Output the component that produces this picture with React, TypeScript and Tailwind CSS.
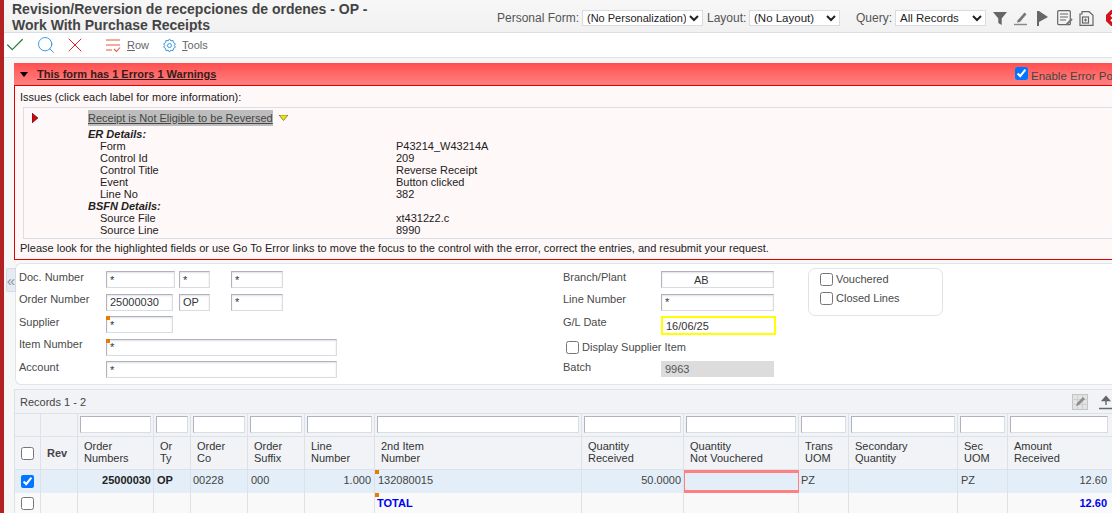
import { Check, Search, X } from "lucide-react";

const inputCls =
  "block h-[17px] bg-white border border-[#d8dce3] border-t-[#aeb3bf] border-l-[#aeb3bf] shadow-[inset_0_1px_2px_rgba(0,0,0,0.12)] text-[#333] text-[11px] px-[3px] outline-none";

function Field({ value, className = "", mark = false }: { value?: string; className?: string; mark?: boolean }) {
  return (
    <div className="relative shrink-0">
      <input readOnly value={value ?? ""} className={`${inputCls} ${className}`} />
      {mark && <span className="absolute left-0 top-0 w-[4px] h-[4px] bg-[#e87c00]" />}
    </div>
  );
}

function Label({ children, className = "" }: { children: React.ReactNode; className?: string }) {
  return <div className={`text-[11px] text-[#4a4a4a] leading-[14px] shrink-0 ${className}`}>{children}</div>;
}

function TopIcons() {
  return (
    <div className="flex items-center shrink-0 h-[16px] ml-[7px]">
      <svg width="14" height="15" viewBox="0 0 14 15" className="shrink-0"><path d="M0 1h14L8.7 7.5V14l-3.4-2V7.5z" fill="#666" /></svg>
      <svg width="14" height="15" viewBox="0 0 14 15" className="ml-[7px] shrink-0">
        <path d="M3.5 9.5 10.5 1.5l2 1.8-6.5 7.7-3 .6z" fill="#777" />
        <path d="M0 13.5h13" stroke="#888" strokeWidth="1.4" />
      </svg>
      <svg width="11" height="15" viewBox="0 0 11 15" className="ml-[9px] shrink-0"><path d="M0 0h2l9 6-9 5v4H0z" fill="#666" /></svg>
      <svg width="16" height="16" viewBox="0 0 16 16" className="ml-[9px] shrink-0" fill="none" stroke="#666">
        <rect x="0.7" y="0.7" width="12.6" height="14" rx="1" strokeWidth="1.2" />
        <path d="M3 4h8M3 7h8M3 10h6" strokeWidth="1.1" />
        <path d="M9.5 14.5 15 9" strokeWidth="2" stroke="#777" />
      </svg>
      <svg width="15" height="15" viewBox="0 0 15 15" className="ml-[6px] shrink-0" fill="none" stroke="#666" strokeWidth="1.2">
        <path d="M1 14.3V3h2V.7h7l4 3.5v10.1z" />
        <rect x="3.5" y="6" width="6" height="6" />
        <path d="M6.5 7.5v3M5 9h3" />
      </svg>
      <svg width="16" height="16" viewBox="0 0 16 16" className="ml-[12px] shrink-0">
        <path d="M5 0h6l5 5v6l-5 5H5l-5-5V5z" fill="#d3131a" />
        <path d="M5 5l6 6M11 5l-6 6" stroke="#fff" strokeWidth="2" />
      </svg>
    </div>
  );
}

function TopBar() {
  return (
    <div className="h-[33px] flex bg-gradient-to-b from-[#f7f7f7] to-[#f1f1f1] border-b border-[#d9dfe4] pl-[8px] overflow-hidden">
      <h1 className="w-[485px] shrink-0 text-[14px] font-bold text-[#444] leading-[16px] pt-[1px]">
        Revision/Reversion de recepciones de ordenes - OP -<br />
        Work With Purchase Receipts
      </h1>
      <div className="flex items-center shrink-0 h-[16px] mt-[10px] text-[12px] text-[#555] whitespace-nowrap">
        <span className="w-[85px]">Personal Form:</span>
        <select defaultValue="a" className="w-[121px] h-[16px] bg-white border border-[#d9dde3] text-[11px] text-[#222]">
          <option value="a">(No Personalization)</option>
        </select>
        <span className="ml-[4px] w-[42px]">Layout:</span>
        <select defaultValue="a" className="w-[91px] h-[16px] bg-white border border-[#d9dde3] text-[11.5px] text-[#222]">
          <option value="a">(No Layout)</option>
        </select>
        <span className="ml-[16px] w-[39px]">Query:</span>
        <select defaultValue="a" className="w-[91px] h-[16px] bg-white border border-[#d9dde3] text-[11.5px] text-[#222]">
          <option value="a">All Records</option>
        </select>
        <TopIcons />
      </div>
    </div>
  );
}

function ActionBar() {
  return (
    <div className="h-[25px] flex items-center bg-white border-b border-[#dfe3e8] text-[11px] text-[#666]">
      <Check size={22} strokeWidth={1.3} className="text-[#1e7e34] shrink-0" />
      <Search size={20} strokeWidth={1.1} className="text-[#2f8fdc] ml-[9.5px] shrink-0" />
      <X size={24} strokeWidth={1} className="text-[#d8232a] ml-[7px] shrink-0" />
      <svg width="15" height="15" viewBox="0 0 15 15" className="ml-[19.5px] shrink-0" fill="none">
        <path d="M0 2h14M0 7h14M0 12h6" stroke="#e8583c" strokeWidth="1.1" />
        <path d="M8 11l2.5 2.5L14 9.5" stroke="#e8583c" strokeWidth="1.1" />
      </svg>
      <span className="ml-[6px]"><u>R</u>ow</span>
      <svg width="15" height="15" viewBox="0 0 24 24" className="ml-[13px] text-[#3d94dd] shrink-0" fill="none" stroke="currentColor" strokeWidth="1.6">
        <path d="M12 1.5l2 3 3.6-.7.7 3.6 3.2 2-1.9 2.6 1.9 2.6-3.2 2-.7 3.6-3.6-.7-2 3-2-3-3.6.7-.7-3.6-3.2-2 1.9-2.6-1.9-2.6 3.2-2 .7-3.6 3.6.7z" />
        <circle cx="12" cy="12" r="3.2" />
      </svg>
      <span className="ml-[5px]"><u>T</u>ools</span>
    </div>
  );
}

const erRows = [
  ["Form", "P43214_W43214A"],
  ["Control Id", "209"],
  ["Control Title", "Reverse Receipt"],
  ["Event", "Button clicked"],
  ["Line No", "382"],
];

function DetailRow({ label, value }: { label: string; value: string }) {
  return (
    <div className="flex h-[12px] leading-[12px] pl-[76px]">
      <span className="w-[296px]">{label}</span>
      <span>{value}</span>
    </div>
  );
}

function ErrorPanel() {
  return (
    <div className="mt-[5px] ml-[10px] w-[1200px] text-[11px] text-[#222]">
      <div className="h-[23px] flex items-center bg-gradient-to-b from-[#ff4f4f] to-[#ff8080] border-b border-[#e60000] pl-[6px]">
        <span className="w-0 h-0 border-x-[4px] border-x-transparent border-t-[5px] border-t-black" />
        <span className="ml-[9px] w-[978px] shrink-0 font-bold text-[#3a1a1a] underline">This form has 1 Errors 1 Warnings</span>
        <input type="checkbox" readOnly checked className="w-[13px] h-[13px] m-0 -mt-[1px]" />
        <span className="ml-[3px] mt-[6px] text-[#444] text-[11.5px]">Enable Error Popup</span>
      </div>
      <div className="h-[174px] bg-[#fff8f8] border border-t-0 border-[#e60000] px-[5px] pt-[4px]">
        <div className="h-[14px] leading-[14px]">Issues (click each label for more information):</div>
        <div className="mt-[3px] ml-[3px] h-[132px] border border-[#d9dfe7] pt-[3px]">
          <div className="flex items-center h-[14px] pl-[8px]">
            <svg width="6" height="10" viewBox="0 0 6 10"><path d="M0 0l6 5-6 5z" fill="#d8000c" stroke="#222" strokeWidth="0.6" /></svg>
            <span className="ml-[50px] bg-[#bdbdbd] underline text-[#444]">Receipt is Not Eligible to be Reversed</span>
            <svg width="9" height="6" viewBox="0 0 9 6" className="ml-[6px]"><path d="M0 0h9L4.5 5.5z" fill="#f5e400" stroke="#444" strokeWidth="0.6" /></svg>
          </div>
          <div className="h-[12px] leading-[12px] mt-[3px] pl-[64px] font-bold italic">ER Details:</div>
          {erRows.map(([label, value]) => (
            <DetailRow key={label} label={label} value={value} />
          ))}
          <div className="h-[12px] leading-[12px] pl-[64px] font-bold italic">BSFN Details:</div>
          <DetailRow label="Source File" value="xt4312z2.c" />
          <DetailRow label="Source Line" value="8990" />
        </div>
        <div className="mt-[2px] leading-[14px] whitespace-nowrap">
          Please look for the highlighted fields or use Go To Error links to move the focus to the control with the error, correct the entries, and resubmit your request.
        </div>
      </div>
    </div>
  );
}

function Row({ label, children, className = "" }: { label: string; children: React.ReactNode; className?: string }) {
  return (
    <div className={`flex items-start h-[17px] ${className}`}>
      <Label className="w-[87px] -mt-[1.2px]">{label}</Label>
      {children}
    </div>
  );
}

function SearchForm() {
  return (
    <div className="relative flex mt-[3px] ml-[11px] w-[1200px] h-[122px] bg-white border border-r-0 border-[#e1e5ea] rounded-tl-[6px] rounded-bl-[6px] pt-[7px] pl-[3px]">
      <div className="absolute -left-[10px] top-[4px] w-[10px] h-[24px] bg-[#e6ebf2] border border-[#d5dbe3] rounded-l-[2px] flex items-center justify-center text-[#8a96a6] text-[15px] leading-none">«</div>
      <div className="w-[544px] shrink-0 flex flex-col gap-[5.5px]">
        <Row label="Doc. Number">
          <Field value="*" className="w-[69px]" />
          <Field value="*" className="w-[31px] ml-[4px]" />
          <Field value="*" className="w-[52px] ml-[21px]" />
        </Row>
        <Row label="Order Number">
          <Field value="25000030" className="w-[67px]" />
          <Field value="OP" className="w-[31px] ml-[6px]" />
          <Field value="*" className="w-[52px] ml-[21px]" />
        </Row>
        <Row label="Supplier"><Field value="*" className="w-[67px]" mark /></Row>
        <Row label="Item Number"><Field value="*" className="w-[231px]" mark /></Row>
        <Row label="Account"><Field value="*" className="w-[231px]" /></Row>
      </div>
      <div className="w-[245px] shrink-0 flex flex-col gap-[5.5px]">
        <Row label="Branch/Plant" className="[&>div:first-child]:w-[98px]">
          <Field value="AB" className="w-[113px] pl-[32px]" />
        </Row>
        <Row label="Line Number" className="[&>div:first-child]:w-[98px]">
          <Field value="*" className="w-[113px]" />
        </Row>
        <Row label="G/L Date" className="[&>div:first-child]:w-[98px]">
          <input readOnly value="16/06/25" className="block w-[115px] h-[19px] bg-white border-2 border-[#ffff00] text-[11px] text-[#333] pl-[3px] outline-none" />
        </Row>
        <label className="flex items-center h-[17px] pl-[3px] text-[11px] text-[#4a4a4a]">
          <input type="checkbox" className="w-[13px] h-[13px] m-0" />
          <span className="ml-[3px]">Display Supplier Item</span>
        </label>
        <Row label="Batch" className="[&>div:first-child]:w-[98px]">
          <div className="w-[113px] h-[16px] bg-[#dcdcdc] text-[11px] text-[#555] leading-[17px] pl-[4px]">9963</div>
        </Row>
      </div>
      <div className="w-[135px] h-[48px] -mt-[3px] border border-[#dfe3e8] rounded-[7px] pl-[11px] pt-[4px] text-[11px] text-[#4a4a4a] flex flex-col gap-[6px]">
        <label className="flex items-center h-[13px]"><input type="checkbox" className="w-[13px] h-[13px] m-0" /><span className="ml-[3px]">Vouchered</span></label>
        <label className="flex items-center h-[13px]"><input type="checkbox" className="w-[13px] h-[13px] m-0" /><span className="ml-[3px]">Closed Lines</span></label>
      </div>
    </div>
  );
}

const gridCols = "grid grid-cols-[26px_37px_76px_37px_57px_57px_70px_207px_102px_115px_50px_109px_50px_102px_100px]";

const headers: [string, string][] = [
  ["Order", "Numbers"],
  ["Or", "Ty"],
  ["Order", "Co"],
  ["Order", "Suffix"],
  ["Line", "Number"],
  ["2nd Item", "Number"],
  ["Quantity", "Received"],
  ["Quantity", "Not Vouchered"],
  ["Trans", "UOM"],
  ["Secondary", "Quantity"],
  ["Sec", "UOM"],
  ["Amount", "Received"],
];

const cellLine = "border-r border-[#dde2e9]";

function DataRow() {
  return (
    <div className={`${gridCols} h-[24px] bg-[#e3eef8] border-t border-[#dde2e9] text-[11px] text-[#444] leading-[21px]`}>
      <div className={`${cellLine} flex items-center justify-center`}><input type="checkbox" readOnly checked className="w-[13px] h-[13px] m-0" /></div>
      <div className={cellLine} />
      <div className={`${cellLine} text-right pr-[2px] font-bold text-[#222]`}>25000030</div>
      <div className={`${cellLine} pl-[3px] font-bold text-[#222]`}>OP</div>
      <div className={`${cellLine} pl-[2px]`}>00228</div>
      <div className={`${cellLine} pl-[3px]`}>000</div>
      <div className={`${cellLine} text-right pr-[3px]`}>1.000</div>
      <div className={`${cellLine} relative pl-[3px]`}>
        132080015
        <span className="absolute left-0 top-0 w-[4px] h-[4px] bg-[#e87c00]" />
      </div>
      <div className={`${cellLine} text-right pr-[2px]`}>50.0000</div>
      <div className="border-x border-y-[3px] border-[#ff8080]" />
      <div className={`${cellLine} pl-[2px]`}>PZ</div>
      <div className={cellLine} />
      <div className={`${cellLine} pl-[3px]`}>PZ</div>
      <div className="text-right pr-[3px]">12.60</div>
    </div>
  );
}

function TotalRow() {
  return (
    <div className={`${gridCols} h-[21px] bg-[#f9f9f9] text-[11px] font-bold text-[#0000ee] leading-[21px]`}>
      <div className={`${cellLine} flex items-center justify-center`}><input type="checkbox" className="w-[13px] h-[13px] m-0" /></div>
      <div className={cellLine} />
      <div className={cellLine} />
      <div className={cellLine} />
      <div className={cellLine} />
      <div className={cellLine} />
      <div className={cellLine} />
      <div className={`${cellLine} relative pl-[2px]`}>
        TOTAL
        <span className="absolute left-0 top-0 w-[4px] h-[4px] bg-[#e87c00]" />
      </div>
      <div className={cellLine} />
      <div className={cellLine} />
      <div className={cellLine} />
      <div className={cellLine} />
      <div className={cellLine} />
      <div className="text-right pr-[3px]">12.60</div>
    </div>
  );
}

function RecordsGrid() {
  return (
    <div className="mt-[4px] ml-[10px] w-[1200px] border-l border-t border-[#dde2e9]">
      <div className="h-[23px] flex items-center bg-[#f1f3f7] pl-[5px] pt-[1px] text-[11px] text-[#444]">
        <span className="w-[1052px] shrink-0">Records 1 - 2</span>
        <svg width="16" height="16" viewBox="0 0 16 16" fill="none" className="shrink-0">
          <rect x="0.5" y="0.5" width="15" height="15" fill="#e4e4e4" stroke="#c4c4c4" />
          <path d="M0 5.5h16M0 10.5h16M5.5 0v16M10.5 0v16" stroke="#cfcfcf" />
          <path d="M4 12l1-3 6-6 2 2-6 6z" fill="#8d8d8d" />
        </svg>
        <svg width="16" height="16" viewBox="0 0 16 16" className="ml-[10px] shrink-0" fill="none">
          <path d="M8 11V3M4.5 6.5 8 2.5l3.5 4z" fill="#666" stroke="#666" strokeWidth="1.4" />
          <path d="M1 14.5h14" stroke="#666" strokeWidth="1.5" />
        </svg>
      </div>
      <div className={`${gridCols} h-[23px] bg-[#f1f3f7] border-t border-[#dde2e9]`}>
        <div className={cellLine} />
        <div className={cellLine} />
        {headers.map(([a], i) => (
          <div key={a + i} className={`${i < 11 ? cellLine : ""} pt-[2px] flex justify-center`}>
            <div className="h-[17px] w-full mx-[2px] bg-white border border-[#d8dce3] border-t-[#aeb3bf] border-l-[#aeb3bf]" />
          </div>
        ))}
      </div>
      <div className={`${gridCols} h-[33px] bg-[#f1f3f7] border-t border-[#dde2e9] text-[11px] text-[#333] leading-[12px]`}>
        <div className={`${cellLine} flex items-center justify-center`}><input type="checkbox" className="w-[13px] h-[13px] m-0" /></div>
        <div className={`${cellLine} flex items-center pl-[6px] font-bold text-[#444]`}>Rev</div>
        {headers.map(([a, b], i) => (
          <div key={i} className={`${i < 11 ? cellLine : ""} pt-[3px] pl-[6px] whitespace-nowrap`}>
            {a}
            <br />
            {b}
          </div>
        ))}
      </div>
      <DataRow />
      <TotalRow />
    </div>
  );
}

export default function App() {
  return (
    <div className="w-[1112px] h-[513px] overflow-hidden flex font-['Liberation_Sans',Arial,sans-serif] bg-[#f7f7f7]">
      <div className="w-[4px] shrink-0 bg-[#b22222]" />
      <div className="w-[1108px] shrink-0">
        <TopBar />
        <ActionBar />
        <ErrorPanel />
        <SearchForm />
        <RecordsGrid />
      </div>
    </div>
  );
}
